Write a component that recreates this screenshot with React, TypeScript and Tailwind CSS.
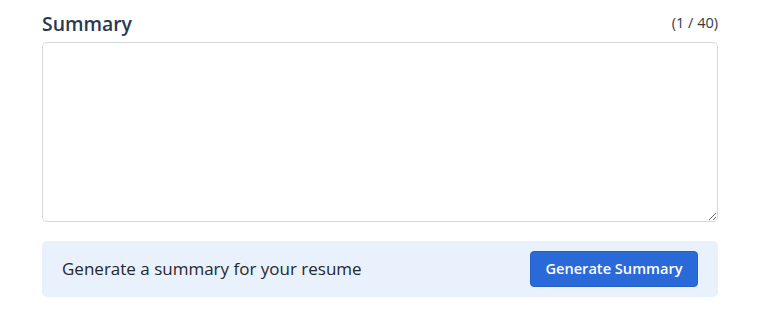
import React from "react";

export default function App() {
  return (
    <div className="w-[768px] h-[309px] bg-white pl-[42px] pr-[50px] pt-[9px]" style={{ fontFamily: '"Open Sans", "Noto Sans", sans-serif' }}>
      <div className="flex items-end justify-between h-[28px]">
        <h2 className="text-[19.4px] leading-[26px] font-semibold text-[#283850]">Summary</h2>
        <span className="text-[14.5px] leading-[26px] text-[#333a45] mb-[1px]">(1 / 40)</span>
      </div>
      <textarea
        className="mt-[5px] block w-full h-[180px] border border-[#d5d8dc] rounded-[5px] bg-white outline-none p-3 text-[15px]"
        style={{ resize: "vertical" }}
      />
      <div className="mt-[19px] h-[56px] bg-[#e8f1fc] rounded-[5px] flex items-center justify-between pl-[20px] pr-[20px]">
        <span className="text-[17px] text-[#25282d]">Generate a summary for your resume</span>
        <button className="h-[36px] w-[168px] rounded-[4px] bg-[#2a69d8] border border-[#2560c9] text-white text-[14.6px] font-semibold">
          Generate Summary
        </button>
      </div>
    </div>
  );
}
